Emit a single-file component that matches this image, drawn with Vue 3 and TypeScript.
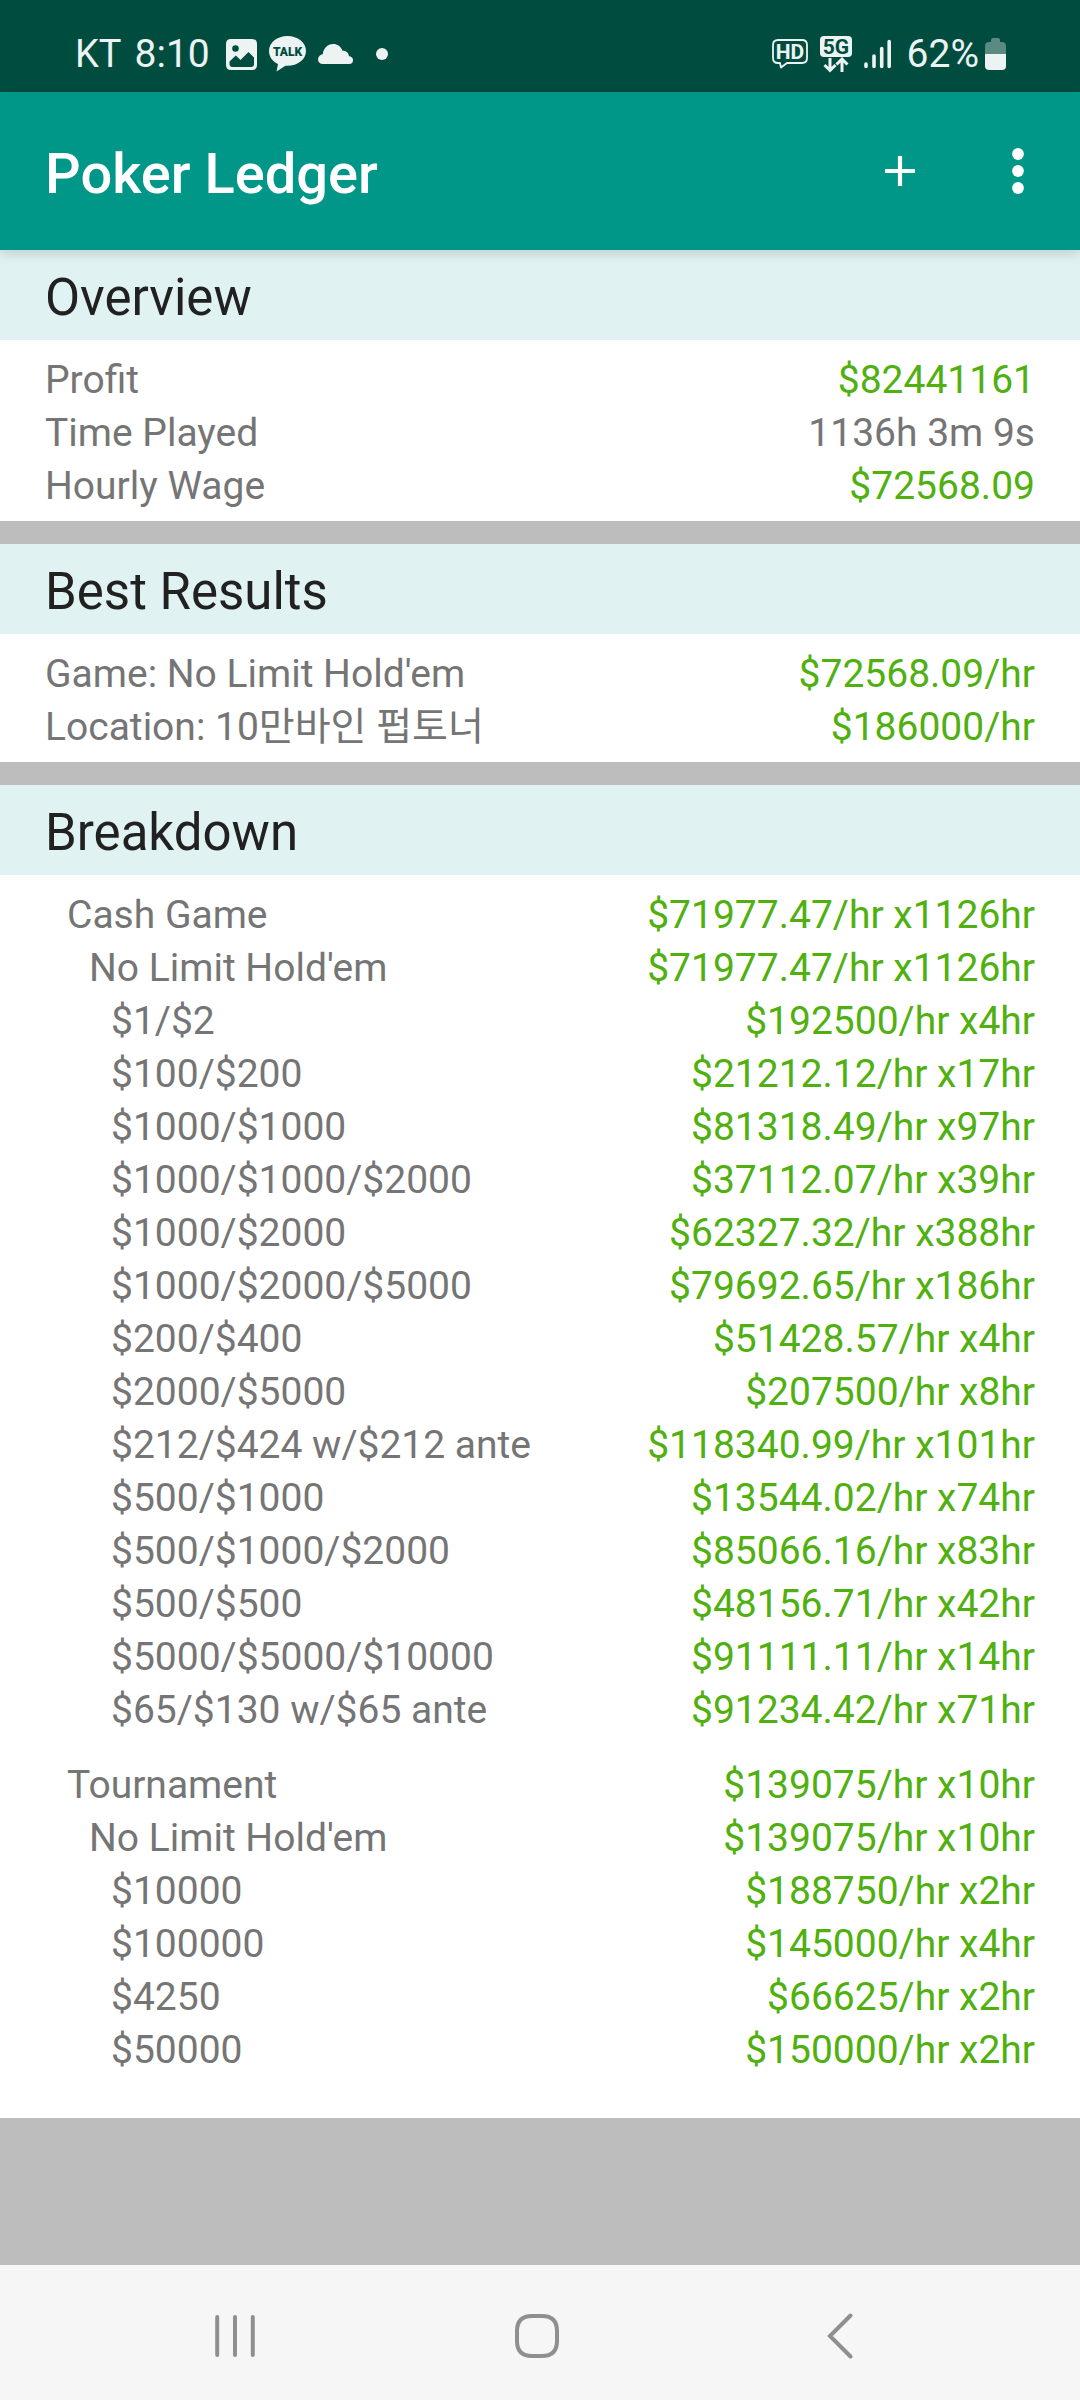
<script setup lang="ts">
interface Row {
  label: string
  value: string
  level?: number
  neutral?: boolean
}

interface Section {
  title: string
  groups: Row[][]
  breakdown?: boolean
}

const sections: Section[] = [
  {
    title: 'Overview',
    groups: [
      [
        { label: 'Profit', value: '$82441161' },
        { label: 'Time Played', value: '1136h 3m 9s', neutral: true },
        { label: 'Hourly Wage', value: '$72568.09' },
      ],
    ],
  },
  {
    title: 'Best Results',
    groups: [
      [
        { label: "Game: No Limit Hold'em", value: '$72568.09/hr' },
        { label: 'Location: 10만바인 펍토너', value: '$186000/hr' },
      ],
    ],
  },
  {
    title: 'Breakdown',
    breakdown: true,
    groups: [
      [
        { label: 'Cash Game', value: '$71977.47/hr x1126hr', level: 1 },
        { label: "No Limit Hold'em", value: '$71977.47/hr x1126hr', level: 2 },
        { label: '$1/$2', value: '$192500/hr x4hr', level: 3 },
        { label: '$100/$200', value: '$21212.12/hr x17hr', level: 3 },
        { label: '$1000/$1000', value: '$81318.49/hr x97hr', level: 3 },
        { label: '$1000/$1000/$2000', value: '$37112.07/hr x39hr', level: 3 },
        { label: '$1000/$2000', value: '$62327.32/hr x388hr', level: 3 },
        { label: '$1000/$2000/$5000', value: '$79692.65/hr x186hr', level: 3 },
        { label: '$200/$400', value: '$51428.57/hr x4hr', level: 3 },
        { label: '$2000/$5000', value: '$207500/hr x8hr', level: 3 },
        { label: '$212/$424 w/$212 ante', value: '$118340.99/hr x101hr', level: 3 },
        { label: '$500/$1000', value: '$13544.02/hr x74hr', level: 3 },
        { label: '$500/$1000/$2000', value: '$85066.16/hr x83hr', level: 3 },
        { label: '$500/$500', value: '$48156.71/hr x42hr', level: 3 },
        { label: '$5000/$5000/$10000', value: '$91111.11/hr x14hr', level: 3 },
        { label: '$65/$130 w/$65 ante', value: '$91234.42/hr x71hr', level: 3 },
      ],
      [
        { label: 'Tournament', value: '$139075/hr x10hr', level: 1 },
        { label: "No Limit Hold'em", value: '$139075/hr x10hr', level: 2 },
        { label: '$10000', value: '$188750/hr x2hr', level: 3 },
        { label: '$100000', value: '$145000/hr x4hr', level: 3 },
        { label: '$4250', value: '$66625/hr x2hr', level: 3 },
        { label: '$50000', value: '$150000/hr x2hr', level: 3 },
      ],
    ],
  },
]
</script>

<template>
  <div class="screen">
    <div class="status">
      <div class="status-side">
        <span class="carrier">KT</span>
        <span class="clock">8:10</span>
        <svg width="31" height="31" viewBox="0 0 31 31" aria-hidden="true">
          <path
            fill="#ecf3f2"
            fill-rule="evenodd"
            d="M5 0H26Q31 0 31 5V26Q31 31 26 31H5Q0 31 0 26V5Q0 0 5 0ZM9.500 6.200A3.300 3.300 0 1 0 9.500 12.800A3.300 3.300 0 1 0 9.500 6.200ZM3.500 22.500L9.800 16.500L14.500 21L22.500 13L28 18.500V25Q28 28 25 28H6.500Q3.500 28 3.500 25Z"
          />
        </svg>
        <svg width="37" height="36" viewBox="0 0 37 36" aria-hidden="true">
          <path
            fill="#ecf3f2"
            d="M18.500 0C28.700 0 37 6.500 37 15C37 23.500 28.700 29.800 18.500 29.800L16.500 29.700L7.500 35.500L9 28C3.500 25.400 0 20.700 0 15C0 6.500 8.300 0 18.500 0Z"
          />
          <text class="talk" x="18.500" y="20" text-anchor="middle">TALK</text>
        </svg>
        <svg width="35" height="20" viewBox="0 0 35 20" aria-hidden="true">
          <path
            fill="#ecf3f2"
            d="M5 20A5 5 0 0 1 0 15.500C0 12.500 2.200 10.500 4.800 10.200C5.300 4.500 9.500 0 15 0C19.500 0 23 2.700 24.500 6.800C28.500 6.600 30.800 9.300 31 12.300C33.500 12.300 35 14 35 16.200A3.900 3.900 0 0 1 31.200 20Z"
          />
        </svg>
        <svg width="36" height="12" viewBox="0 0 36 12" aria-hidden="true">
          <circle cx="17" cy="6" r="6" fill="#ecf3f2" />
        </svg>
      </div>
      <div class="status-side">
        <svg width="36" height="30" viewBox="0 0 36 30" aria-hidden="true">
          <path
            fill="none"
            stroke="#ecf3f2"
            stroke-width="1.800"
            stroke-linejoin="round"
            d="M6 1H30Q35 1 35 6V19Q35 24 30 24H15L9 28.500L8 24H6Q1 24 1 19V6Q1 1 6 1Z"
          />
          <text class="badge light" x="18" y="20" text-anchor="middle">HD</text>
        </svg>
        <svg width="32" height="38" viewBox="0 0 32 38" aria-hidden="true">
          <rect width="32" height="21" y="1" rx="4" fill="#ecf3f2" />
          <text class="badge dark" x="16" y="19" text-anchor="middle">5G</text>
          <path
            fill="none"
            stroke="#ecf3f2"
            stroke-width="3"
            d="M10 23V35M4.500 30L10 35.500L15.500 30M22 37V25M16.500 29.500L22 24L27.500 29.500"
          />
        </svg>
        <svg width="28" height="30" viewBox="0 0 28 30" aria-hidden="true">
          <path
            fill="none"
            stroke="#ecf3f2"
            stroke-width="3.600"
            stroke-linecap="round"
            d="M2 25V27.500M10 17V27.500M17.700 9.500V27.500M25.200 2.500V27.500"
          />
        </svg>
        <div class="battery">
          <span>62%</span>
          <svg width="21" height="32" viewBox="0 0 21 32" aria-hidden="true">
            <path
              fill="#5a8b82"
              d="M0 16V8Q0 4 4 4H6V2Q6 0 8 0H13Q15 0 15 2V4H17Q21 4 21 8V16Z"
            />
            <path fill="#ecf3f2" d="M0 16H21V28Q21 32 17 32H4Q0 32 0 28Z" />
          </svg>
        </div>
      </div>
    </div>

    <header class="app-bar">
      <h1>Poker Ledger</h1>
      <button class="add" type="button" aria-label="Add session">
        <svg width="30" height="30" viewBox="0 0 30 30">
          <path d="M15 0V30M0 15H30" stroke="#fff" stroke-width="4.200" />
        </svg>
      </button>
      <button class="more" type="button" aria-label="More options">
        <svg width="12" height="46" viewBox="0 0 12 46">
          <circle cx="6" cy="6" r="5.900" fill="#fff" />
          <circle cx="6" cy="23" r="5.900" fill="#fff" />
          <circle cx="6" cy="40" r="5.900" fill="#fff" />
        </svg>
      </button>
    </header>

    <main>
      <section
        v-for="section in sections"
        :key="section.title"
        :class="{ breakdown: section.breakdown }"
      >
        <h2>{{ section.title }}</h2>
        <div class="content">
          <table v-for="(group, index) in section.groups" :key="index">
            <tbody>
              <tr v-for="row in group" :key="row.label">
                <th scope="row" :class="row.level ? `level-${row.level}` : ''">{{ row.label }}</th>
                <td :class="{ neutral: row.neutral }">{{ row.value }}</td>
              </tr>
            </tbody>
          </table>
        </div>
      </section>
    </main>

    <nav>
      <button type="button" aria-label="Recent apps">
        <svg width="40" height="46" viewBox="0 0 40 46">
          <path
            d="M2.200 4V42M20 4V42M37.800 4V42"
            stroke="#8f8f8f"
            stroke-width="4"
            stroke-linecap="round"
          />
        </svg>
      </button>
      <button type="button" aria-label="Home">
        <svg width="44" height="46" viewBox="0 0 44 46">
          <path
            d="M17 3H27Q42 3 42 18V28Q42 43 27 43H17Q2 43 2 28V18Q2 3 17 3Z"
            fill="none"
            stroke="#8f8f8f"
            stroke-width="4"
          />
        </svg>
      </button>
      <button type="button" aria-label="Back">
        <svg width="26" height="46" viewBox="0 0 26 46">
          <path
            d="M23.500 2.500L3 23L23.500 43.500"
            fill="none"
            stroke="#8f8f8f"
            stroke-width="4"
            stroke-linecap="round"
          />
        </svg>
      </button>
    </nav>
  </div>
</template>

<style>
body {
  margin: 0;
}
</style>

<style scoped>
.screen {
  display: flex;
  flex-direction: column;
  min-height: 100vh;
  background: #bdbdbd;
  font-family: Roboto, 'Noto Sans CJK KR', sans-serif;
}

svg {
  display: block;
  flex: none;
}

button {
  display: flex;
  align-items: center;
  justify-content: center;
  padding: 0;
  border: 0;
  background: none;
}

.status {
  display: flex;
  justify-content: space-between;
  height: 92px;
  padding: 16px 74px 0 75px;
  box-sizing: border-box;
  background: #004d40;
  color: #ecf3f2;
  font-size: 39px;
  line-height: 76px;
}

.status-side {
  display: flex;
  align-items: center;
  gap: 12px;
}

.carrier {
  font-size: 38px;
}

.clock {
  padding: 0 4px 0 1px;
}

.battery {
  display: flex;
  align-items: center;
  gap: 6px;
  padding-left: 3px;
}

.talk {
  fill: #004d40;
  font-size: 12px;
  font-weight: 900;
}

.badge {
  font-size: 21px;
  font-weight: 700;
}

.light {
  fill: #ecf3f2;
}

.dark {
  fill: #004d40;
}

.app-bar {
  position: relative;
  display: flex;
  height: 158px;
  padding: 0 12px 0 45px;
  background: #009688;
  box-shadow: 0 3px 12px rgba(0, 0, 0, 0.16);
}

h1 {
  flex: 1;
  margin: 0;
  padding-top: 6px;
  color: #fff;
  font-size: 56px;
  font-weight: 500;
  line-height: 152px;
}

.add {
  width: 135px;
}

.more {
  width: 101px;
}

main {
  display: flex;
  flex: 1;
  flex-direction: column;
  gap: 23px;
}

h2 {
  margin: 0;
  padding: 5px 45px 0;
  background: #e0f2f1;
  color: #212121;
  font-size: 51px;
  font-weight: 400;
  line-height: 85px;
}

.content {
  display: flex;
  flex-direction: column;
  gap: 22px;
  padding: 14px 45px 8px;
  background: #fff;
}

.breakdown .content {
  padding-bottom: 41px;
}

table {
  width: 100%;
  border-spacing: 0;
  font-size: 39px;
  line-height: 53px;
}

th,
td {
  padding: 0;
  font-weight: 400;
  white-space: nowrap;
}

th {
  color: #757575;
  text-align: left;
}

td {
  color: #50b010;
  text-align: right;
}

.neutral {
  color: #757575;
}

.level-1 {
  padding-left: 22px;
}

.level-2 {
  padding-left: 44px;
}

.level-3 {
  padding-left: 66px;
}

nav {
  display: flex;
  height: 135px;
  padding: 7px 89px 0 84px;
  box-sizing: border-box;
  background: #f6f6f6;
}

nav button {
  flex: 1;
}
</style>
